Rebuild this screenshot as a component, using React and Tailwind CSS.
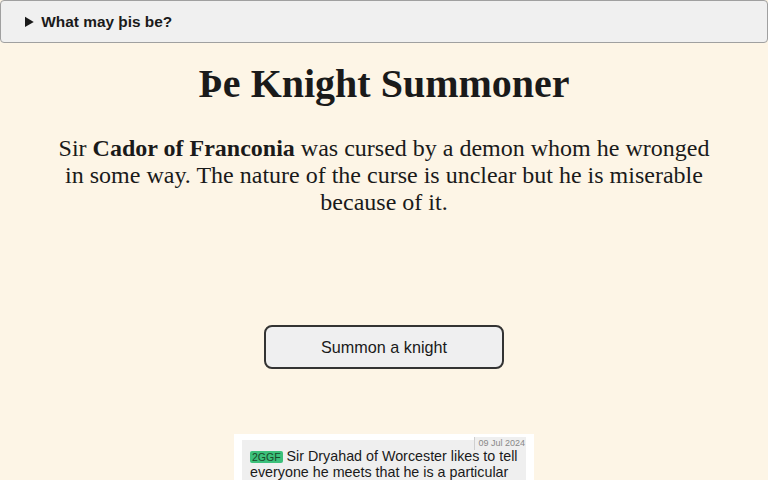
import React from "react";

export default function App() {
  return (
    <div className="min-h-[480px] bg-[#fdf5e6] text-[#1a1a1a]">
      <details className="rounded-[4px] border border-[#a0a0a0] bg-[#f0f0f0]">
        <summary className="cursor-pointer px-6 py-[9px] text-[15.4px] font-bold [font-family:'Liberation_Sans',Arial,sans-serif]">
          What may þis be?
        </summary>
      </details>

      <div className="flex flex-col items-center [font-family:'Liberation_Serif','Times_New_Roman',serif]">
        <h1 className="mt-[18px] text-[40px] font-bold leading-[46px]">Þe Knight Summoner</h1>
        <p className="mt-[28px] max-w-[660px] text-center text-[24px] leading-[27px]">
          Sir <b>Cador of Franconia</b> was cursed by a demon whom he wronged in some way. The nature of the curse is unclear but he is miserable because of it.
        </p>

        <button className="mt-[109px] h-[44px] w-[240px] rounded-[8px] border-2 border-[#333] bg-[#efeff0] text-[16.2px] [font-family:'Liberation_Sans',Arial,sans-serif]">
          Summon a knight
        </button>

        <div className="mt-[65px] w-[300px] bg-white px-[8px] pt-[6px] [font-family:'Liberation_Sans',Arial,sans-serif]">
          <div className="relative bg-[#efefef] px-[8px] pt-[9px] text-[14.3px] leading-[15px]">
            <span className="absolute right-0 top-[-3px] border-l border-[#cfcfcf] bg-[#efefef] pl-[3px] pr-[1px] text-[9px] leading-[13px] text-[#888]">
              09 Jul 2024
            </span>
            <span className="rounded-[2px] bg-[#3cc07a] px-[2px] text-[10.5px] text-[#1a4a2a]">2GGF</span>{" "}
            Sir Dryahad of Worcester likes to tell everyone he meets that he is a particular fan of jousting and has never lost.
          </div>
        </div>
      </div>
    </div>
  );
}
